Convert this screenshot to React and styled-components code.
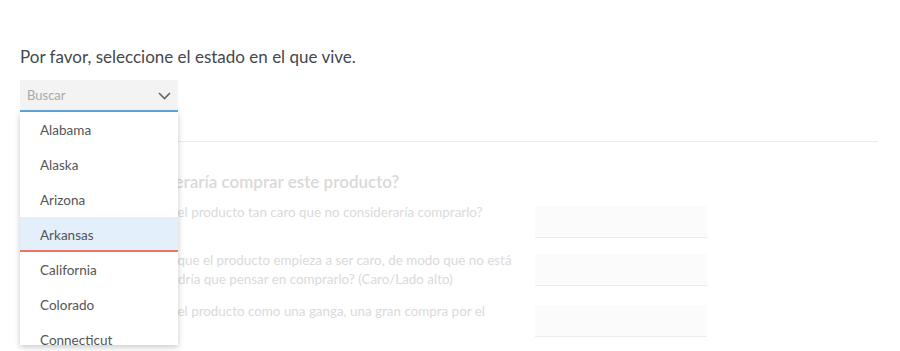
import React from "react";
import styled, { createGlobalStyle } from "styled-components";

const Global = createGlobalStyle`
  html, body { margin: 0; padding: 0; background: #fff; }
  body { font-family: Lato, "Liberation Sans", sans-serif; }
  * { box-sizing: border-box; }
`;

const Page = styled.div`
  padding: 46px 22px 0 20px;
  width: 900px;
  height: 351px;
  overflow: hidden;
`;

const Title = styled.h1`
  margin: 0;
  font-size: 17px;
  line-height: 22px;
  font-weight: 400;
  color: #43484d;
`;

const SelectWrap = styled.div`
  position: relative;
  width: 158px;
  margin-top: 12px;
  z-index: 2;
`;

const SearchBox = styled.div`
  height: 32px;
  background: #f3f3f3;
  border-bottom: 2px solid #62a8e0;
  display: flex;
  align-items: center;
  justify-content: space-between;
  padding: 0 7px 0 7px;
`;

const Placeholder = styled.span`
  font-size: 13px;
  color: #a9a9a9;
`;

const Chevron = styled.svg`
  width: 13px;
  height: 8px;
  margin-top: 2px;
`;

const Menu = styled.ul`
  position: absolute;
  top: 100%;
  left: 0;
  width: 158px;
  height: 233px;
  margin: 0;
  padding: 0;
  list-style: none;
  background: #fff;
  overflow-y: scroll;
  box-shadow: 0 2px 6px rgba(0, 0, 0, 0.22);
  &::-webkit-scrollbar { width: 6px; }
  &::-webkit-scrollbar-track { background: #efefef; }
  &::-webkit-scrollbar-thumb { background: #c9c9c9; }
`;

const Option = styled.li`
  height: 35px;
  display: flex;
  align-items: center;
  padding-left: 20px;
  font-size: 13.5px;
  color: #555;
  background: ${(p) => (p.$active ? "#e3f0fb" : "#fff")};
  border-bottom: ${(p) => (p.$active ? "2px solid #ec7466" : "none")};
  padding-top: ${(p) => (p.$active ? "2px" : "0")};
`;

const Faded = styled.div`
  position: relative;
  z-index: 1;
`;

const Divider = styled.hr`
  margin: 29px 0 0 0;
  border: 0;
  border-top: 1px solid #ececec;
`;

const SectionTitle = styled.h2`
  margin: 28px 0 0 0;
  font-size: 17px;
  line-height: 24px;
  font-weight: 600;
  color: #d9d9d9;
`;

const Questions = styled.div`
  margin-top: 9px;
  display: flex;
  flex-direction: column;
  gap: 13px;
`;

const Row = styled.div`
  display: grid;
  grid-template-columns: 495px 172px;
  column-gap: 20px;
  align-items: start;
`;

const Question = styled.p`
  margin: 0;
  font-size: 13.4px;
  line-height: 19px;
  color: #dadada;
`;

const Answer = styled.div`
  margin-top: 3px;
  height: 32px;
  background: #fbfbfb;
  border-bottom: 1px solid #ececec;
`;

const states = [
  "Alabama", "Alaska", "Arizona", "Arkansas", "California", "Colorado",
  "Connecticut", "Delaware", "Florida", "Georgia", "Hawaii", "Idaho",
  "Illinois", "Indiana", "Iowa", "Kansas", "Kentucky", "Louisiana", "Maine",
  "Maryland", "Massachusetts", "Michigan", "Minnesota", "Mississippi",
  "Missouri", "Montana", "Nebraska", "Nevada", "New Hampshire", "New Jersey",
  "New Mexico", "New York", "North Carolina", "North Dakota", "Ohio",
  "Oklahoma", "Oregon", "Pennsylvania", "Rhode Island", "South Carolina",
  "South Dakota", "Tennessee", "Texas", "Utah", "Vermont", "Virginia",
  "Washington", "West Virginia", "Wisconsin", "Wyoming",
];

const questions = [
  "¿A qué precio consideraría el producto tan caro que no consideraría comprarlo?",
  "¿A qué precio consideraría que el producto empieza a ser caro, de modo que no está fuera de cuestión, pero tendría que pensar en comprarlo? (Caro/Lado alto)",
  "¿A qué precio consideraría el producto como una ganga, una gran compra por el dinero? (Ganga/Lado bajo)",
];

export default function App() {
  return (
    <>
      <Global />
      <Page>
        <Title>Por favor, seleccione el estado en el que vive.</Title>
        <SelectWrap>
          <SearchBox>
            <Placeholder>Buscar</Placeholder>
            <Chevron viewBox="0 0 13 8">
              <polyline points="1,1 6.5,6.5 12,1" fill="none" stroke="#666" strokeWidth="1.6" />
            </Chevron>
          </SearchBox>
          <Menu>
            {states.map((s) => (
              <Option key={s} $active={s === "Arkansas"}>{s}</Option>
            ))}
          </Menu>
        </SelectWrap>
        <Faded>
          <Divider />
          <SectionTitle>¿A qué precio consideraría comprar este producto?</SectionTitle>
          <Questions>
            {questions.map((q) => (
              <Row key={q}>
                <Question>{q}</Question>
                <Answer />
              </Row>
            ))}
          </Questions>
        </Faded>
      </Page>
    </>
  );
}
